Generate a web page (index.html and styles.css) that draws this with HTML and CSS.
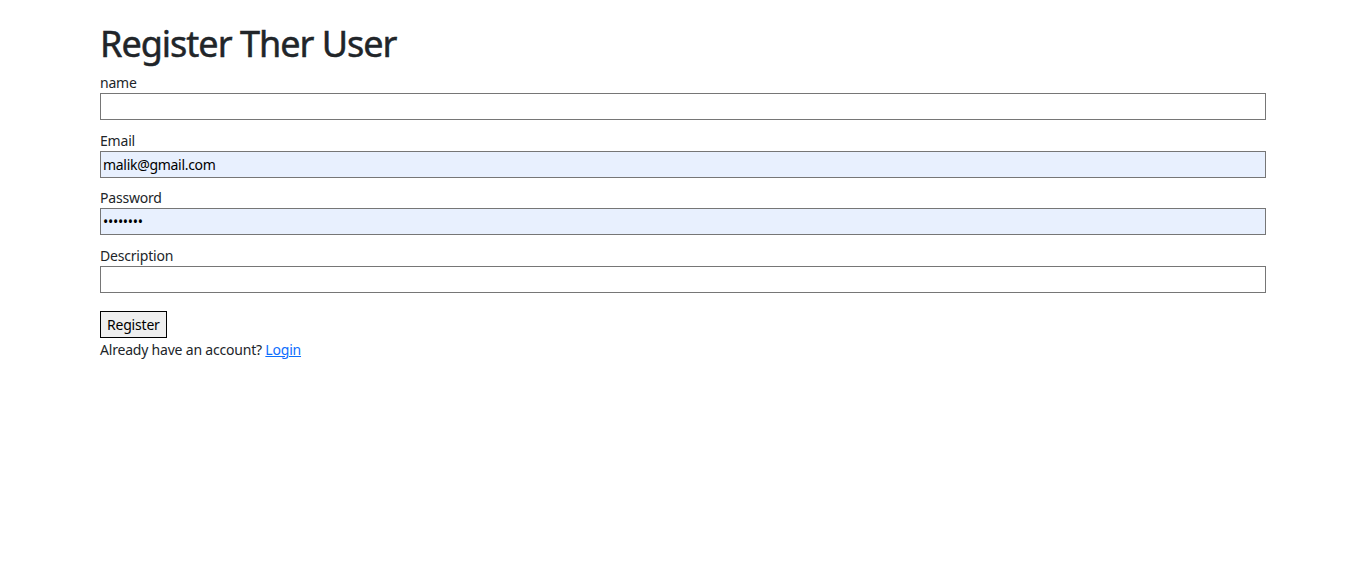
FILE: index.html
```html
<!DOCTYPE html>
<html lang="en">
<head>
<meta charset="utf-8">
<title>Register</title>
<link rel="stylesheet" href="styles.css">
</head>
<body>
<div class="container">
  <h1 class="title">Register Ther User</h1>
  <form class="form">
    <div class="field">
      <label class="label" for="name">name</label>
      <input class="input" id="name" type="text">
    </div>
    <div class="field">
      <label class="label" for="email">Email</label>
      <input class="input input-filled" id="email" type="email" value="malik@gmail.com">
    </div>
    <div class="field">
      <label class="label" for="password">Password</label>
      <input class="input input-filled input-password" id="password" type="password" value="12345678">
    </div>
    <div class="field">
      <label class="label" for="description">Description</label>
      <input class="input" id="description" type="text">
    </div>
    <button class="btn" type="button">Register</button>
    <p class="note">Already have an account? <a class="link" href="#">Login</a></p>
  </form>
</div>
</body>
</html>
```
FILE: styles.css
```css
html, body {
  margin: 0;
  padding: 0;
  background: #ffffff;
}
body {
  font-family: "Noto Sans", "Open Sans", sans-serif;
  font-size: 14px;
  letter-spacing: -0.2px;
  color: #212529;
}
.container {
  padding: 18px 95px 0 100px;
}
.title {
  margin: 0;
  font-size: 36px;
  font-weight: 400;
  line-height: 52px;
  letter-spacing: -1px;
  color: #212529;
  -webkit-text-stroke: 0.5px #212529;
}
.form {
  margin: 0;
}
.field {
  margin-bottom: 7.6px;
}
.label {
  display: block;
  padding-top: 3px;
  line-height: 20px;
}
.input {
  display: block;
  box-sizing: border-box;
  width: 100%;
  height: 27px;
  margin: 0;
  padding: 1px 2px;
  border: 1px solid #767676;
  border-radius: 0;
  background: #ffffff;
  font-family: inherit;
  font-size: 14px;
  letter-spacing: -0.3px;
  color: #000000;
  outline: none;
}
.input-filled {
  background: #e8f0fe;
}
.btn {
  display: block;
  box-sizing: border-box;
  height: 27px;
  margin: 18px 0 0 0;
  padding: 1px 6px;
  border: 1px solid #000000;
  border-radius: 0;
  background: #efefef;
  font-family: inherit;
  font-size: 14px;
  letter-spacing: -0.2px;
  color: #000000;
}
.note {
  margin: 0;
  line-height: 24px;
}
.link {
  color: #0d6efd;
  text-decoration: underline;
}
```
